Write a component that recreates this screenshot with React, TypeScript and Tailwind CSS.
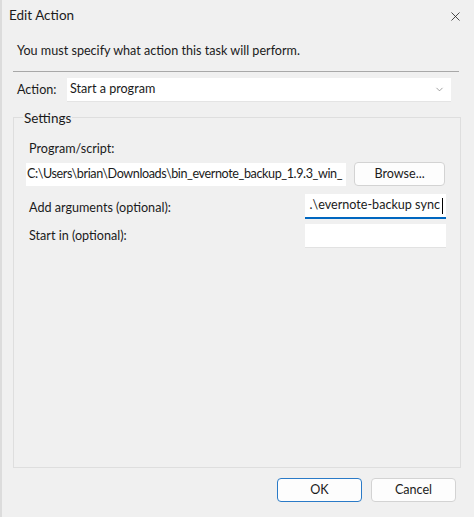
import { ChevronDown, X } from "lucide-react";

const font = { fontFamily: 'Lato, "Noto Sans", sans-serif' };

const App = () => {
  return (
    <div
      className="w-[474px] h-[517px] bg-[#f0f0f0] text-[#1b1b1b] text-[12.6px] flex flex-col border-l-2 border-[#dcdcdc] overflow-hidden"
      style={font}
    >
      {/* title bar */}
      <div className="h-[32px] flex items-center justify-between pl-[7px] pr-[11px] shrink-0">
        <span className="text-[13.5px] leading-none">Edit Action</span>
        <X size={15} strokeWidth={1.3} className="text-[#222]" />
      </div>

      <div className="pl-[15px] mt-[7px] leading-[24px]">You must specify what action this task will perform.</div>

      <div className="ml-[11px] mr-[15px] mt-[8px] h-px bg-[#a8a8a8]" />

      {/* action row */}
      <div className="flex items-center ml-[15px] mr-[23px] mt-[6px] h-[24px]">
        <span className="w-[50px]">Action:</span>
        <div className="flex-1 h-[24px] bg-white border-b border-[#e4e4e4] flex items-center justify-between pl-[3px] pr-[6px]">
          <span>Start a program</span>
          <ChevronDown size={11} strokeWidth={1.5} className="text-[#777]" />
        </div>
      </div>

      {/* settings group */}
      <div className="ml-[11px] mr-[13px] mt-[15px] h-[351px] border border-[#dedede] relative flex flex-col pt-[22px] px-[14px]">
        <span className="absolute left-[9px] -top-[9px] px-[1px] bg-[#f0f0f0] leading-[18px] text-[13.5px]">Settings</span>
        <div className="leading-[18px] pl-[1px]">Program/script:</div>
        <div className="flex items-center mt-[4px] -ml-[2px]">
          <div className="w-[320px] shrink-0 h-[23px] bg-white flex items-center pl-[1px] overflow-hidden whitespace-nowrap tracking-[-0.4px]">
            C:\Users\brian\Downloads\bin_evernote_backup_1.9.3_win_
          </div>
          <button className="ml-[8px] w-[91px] h-[24px] bg-[#fdfdfd] border border-[#d3d3d3] rounded-[4px] flex items-center justify-center">
            Browse...
          </button>
        </div>
        <div className="flex items-center mt-[8px]">
          <span className="pl-[1px] w-[278px] pt-[3px]">Add arguments (optional):</span>
          <div className="w-[141px] h-[25px] bg-white border-b-2 border-[#0067c0] flex items-center justify-end pr-[3px] whitespace-nowrap overflow-hidden">
            .\evernote-backup sync
            <span className="inline-block w-px h-[16px] bg-black ml-[2px]" />
          </div>
        </div>
        <div className="flex items-center mt-[5px]">
          <span className="pl-[1px] w-[278px]">Start in (optional):</span>
          <div className="w-[141px] h-[24px] bg-white border-b border-[#e2e2e2]" />
        </div>
      </div>

      {/* buttons */}
      <div className="flex justify-end gap-[9px] mt-[10px] mr-[18px]">
        <button className="w-[85px] h-[24px] bg-[#fdfdfd] border border-[#2a7ac7] rounded-[4px] flex items-center justify-center">
          OK
        </button>
        <button className="w-[85px] h-[24px] bg-[#fdfdfd] border border-[#d3d3d3] rounded-[4px] flex items-center justify-center">
          Cancel
        </button>
      </div>
    </div>
  );
};

export default App;
